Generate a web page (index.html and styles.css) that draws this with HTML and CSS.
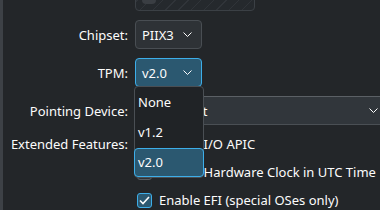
FILE: index.html
```html
<!DOCTYPE html>
<html lang="en">
<head>
    <meta charset="UTF-8">
    <title>System - Motherboard</title>
    <link rel="stylesheet" href="styles.css">
</head>
<body>
    <div class="page">
        <div class="form">
            <div class="row top-row">
                <div class="label"></div>
                <div class="net-button">
                    <span class="net-icon"></span>
                    <span class="net-mark"></span>
                    <span class="net-text">Network</span>
                </div>
            </div>
            <div class="row">
                <div class="label">Chipset:</div>
                <div class="combo small">
                    <span>PIIX3</span>
                    <svg class="chevron" width="9" height="5" viewBox="0 0 9 5"><polyline points="0.5,0.5 4.5,4.5 8.5,0.5" fill="none" stroke="#fcfcfc" stroke-width="1"/></svg>
                </div>
            </div>
            <div class="row">
                <div class="label">TPM:</div>
                <div class="combo small open">
                    <span>v2.0</span>
                    <svg class="chevron" width="9" height="5" viewBox="0 0 9 5"><polyline points="0.5,0.5 4.5,4.5 8.5,0.5" fill="none" stroke="#fcfcfc" stroke-width="1"/></svg>
                </div>
            </div>
            <div class="row">
                <div class="label">Pointing Device:</div>
                <div class="combo wide">
                    <span>USB Tablet</span>
                    <svg class="chevron" width="9" height="5" viewBox="0 0 9 5"><polyline points="0.5,0.5 4.5,4.5 8.5,0.5" fill="none" stroke="#fcfcfc" stroke-width="1"/></svg>
                </div>
            </div>
            <div class="row check-row first">
                <div class="label">Extended Features:</div>
                <label class="check"><span class="box checked"><svg width="11" height="9" viewBox="0 0 11 9"><polyline points="1,4.5 4,7.5 10,1" fill="none" stroke="#fcfcfc" stroke-width="1.6"/></svg></span>Enable I/O APIC</label>
            </div>
            <div class="row check-row">
                <div class="label"></div>
                <label class="check"><span class="box"></span>Enable Hardware Clock in UTC Time</label>
            </div>
            <div class="row check-row">
                <div class="label"></div>
                <label class="check"><span class="box checked"><svg width="11" height="9" viewBox="0 0 11 9"><polyline points="1,4.5 4,7.5 10,1" fill="none" stroke="#fcfcfc" stroke-width="1.6"/></svg></span>Enable EFI (special OSes only)</label>
            </div>
        </div>

        <!-- TPM popup list -->
        <div class="popup">
            <div class="item">None</div>
            <div class="item">v1.2</div>
            <div class="item selected">v2.0</div>
        </div>
    </div>
</body>
</html>
```

FILE: styles.css
```css
* {
    margin: 0;
    padding: 0;
    box-sizing: border-box;
}

body {
    width: 380px;
    height: 210px;
    overflow: hidden;
    background: #232629;
    font-family: "Noto Sans", sans-serif;
    font-size: 13px;
    color: #fcfcfc;
}

.page {
    position: relative;
    height: 210px;
    border-left: 3px solid #3d4146;
}

.form {
    display: flex;
    flex-direction: column;
}

.row {
    display: flex;
    align-items: center;
    gap: 7px;
    height: 29px;
    margin-top: 9px;
}

.label {
    width: 125px;
    text-align: right;
    white-space: nowrap;
    flex-shrink: 0;
}

.top-row {
    height: 30px;
    margin-top: -19px;
}

.net-button {
    width: 120px;
    height: 30px;
    border: 1px solid #3b4045;
    border-radius: 4px;
    background: repeating-linear-gradient(-45deg, #25292d 0 8px, #303439 8px 9px);
    display: flex;
    align-items: flex-end;
    padding: 0 6px 6px;
    gap: 10px;
    overflow: hidden;
}

.net-icon {
    width: 14px;
    height: 10px;
    border-radius: 4px;
    background: #3a3e43;
}

.net-mark {
    width: 7px;
    height: 5px;
    background: #e6e6e6;
    border-radius: 1px;
    margin-bottom: 6px;
}

.net-text {
    color: #8a8d90;
    margin-bottom: 6px;
    line-height: 13px;
}

.combo {
    height: 29px;
    border: 1px solid #494e53;
    border-radius: 4px;
    background: #2e3236;
    display: flex;
    align-items: center;
    justify-content: space-between;
    padding: 0 9px 0 6px;
    white-space: nowrap;
    flex-shrink: 0;
}

.combo.small {
    width: 67px;
}

.combo.open {
    background: #2b5870;
    border-color: #3daee9;
}

.combo.wide {
    width: 256px;
    background: #31363b;
    border-color: #4a4f54;
    border-top-color: #5b6065;
    padding-right: 12px;
}

.check-row {
    height: 28px;
    margin-top: 0;
}

.check-row.first {
    margin-top: 5px;
}

.check {
    display: flex;
    align-items: center;
    gap: 7px;
    margin-left: 2px;
    white-space: nowrap;
}

.box {
    width: 15px;
    height: 15px;
    border: 1px solid #5a5e63;
    border-radius: 3px;
    background: #2e3236;
    display: flex;
    align-items: center;
    justify-content: center;
}

.box.checked {
    background: #2b5870;
    border-color: #3daee9;
}

.popup {
    position: absolute;
    left: 131px;
    top: 86px;
    width: 70px;
    height: 92px;
    background: #202326;
    border: 1px solid #4a4f54;
    border-radius: 4px;
    padding-top: 1px;
    display: flex;
    flex-direction: column;
    gap: 1px;
}

.item {
    height: 29px;
    line-height: 29px;
    padding-left: 3px;
}

.item.selected {
    margin: 0 -1px;
    background: #2b5870;
    border: 1px solid #3daee9;
    border-radius: 4px;
    line-height: 27px;
}
```
